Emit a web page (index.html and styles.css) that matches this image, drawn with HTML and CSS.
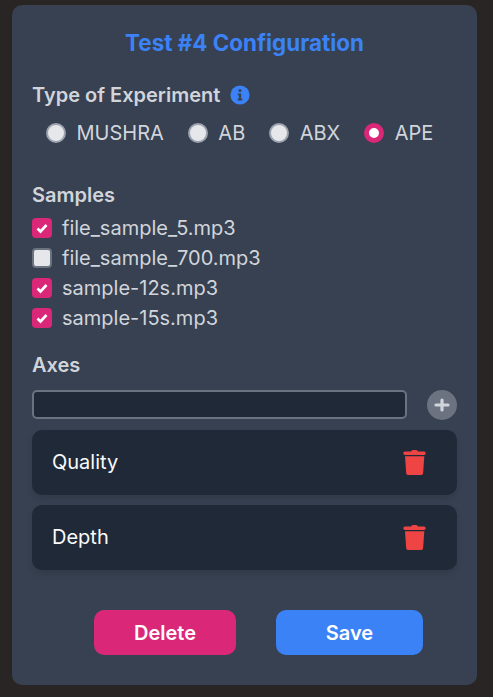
FILE: index.html
```html
<!DOCTYPE html>
<html lang="en">
<head>
  <meta charset="UTF-8">
  <title>Test Configuration</title>
  <link rel="stylesheet" href="styles.css">
</head>
<body>
  <div class="card">
    <h2 class="title">Test #4 Configuration</h2>

    <div class="label-row">
      <span class="label">Type of Experiment</span>
      <svg class="info" viewBox="0 0 20 20"><circle cx="10" cy="10" r="9.6" fill="#3b82f6"/><circle cx="10" cy="5.6" r="1.5" fill="#374151"/><path d="M7.8 8.4h3.4v5.4h1.2v1.8H7.6v-1.8h1.2v-3.6h-1z" fill="#374151"/></svg>
    </div>
    <div class="radios">
      <label class="radio"><input type="radio" name="type"> MUSHRA</label>
      <label class="radio"><input type="radio" name="type"> AB</label>
      <label class="radio"><input type="radio" name="type"> ABX</label>
      <label class="radio"><input type="radio" name="type" checked> APE</label>
    </div>

    <div class="label samples-label">Samples</div>
    <div class="samples">
      <label class="check"><input type="checkbox" checked> file_sample_5.mp3</label>
      <label class="check"><input type="checkbox"> file_sample_700.mp3</label>
      <label class="check"><input type="checkbox" checked> sample-12s.mp3</label>
      <label class="check"><input type="checkbox" checked> sample-15s.mp3</label>
    </div>

    <div class="label axes-label">Axes</div>
    <div class="axis-input">
      <input type="text">
      <button class="add" type="button">
        <svg viewBox="0 0 16 16" width="16" height="16"><path d="M8 3v10M2 8h12" stroke="#d1d5db" stroke-width="3.2" stroke-linecap="round"/></svg>
      </button>
    </div>

    <div class="axis">
      <span>Quality</span>
      <svg class="trash" viewBox="0 0 24 27"><path d="M1.300 4.200q0-1.600 1.600-1.700H9l.8-.9q.4-.6 1-.6h3.400q.6 0 1 .6l.8.9h6q1.700.1 1.700 1.700 0 1.800-1.700 1.800H3q-1.700 0-1.700-1.800z"/><path d="M3 7.200h19.300l-1.200 17.100q-.1 1.700-1.800 1.700H6q-1.700 0-1.800-1.700z"/></svg>
    </div>
    <div class="axis">
      <span>Depth</span>
      <svg class="trash" viewBox="0 0 24 27"><path d="M1.300 4.200q0-1.600 1.600-1.700H9l.8-.9q.4-.6 1-.6h3.400q.6 0 1 .6l.8.9h6q1.700.1 1.700 1.700 0 1.800-1.700 1.800H3q-1.700 0-1.700-1.800z"/><path d="M3 7.200h19.300l-1.200 17.100q-.1 1.700-1.800 1.700H6q-1.700 0-1.800-1.700z"/></svg>
    </div>

    <div class="actions">
      <button class="btn delete" type="button">Delete</button>
      <button class="btn save" type="button">Save</button>
    </div>
  </div>
</body>
</html>
```

FILE: styles.css
```css
* {
  box-sizing: border-box;
}
body {
  margin: 0;
  height: 697px;
  overflow: hidden;
  padding: 5px 16px 12px 12px;
  background: #292524;
  font-family: Inter, sans-serif;
  color: #d1d5db;
}
.card {
  height: 680px;
  padding: 24px 20px;
  background: #374151;
  border-radius: 10px;
}
.title {
  margin: 0;
  text-align: center;
  font-size: 22.4px;
  line-height: 28px;
  font-weight: 700;
  color: #3b82f6;
}
.label {
  font-size: 20px;
  line-height: 24px;
  font-weight: 600;
}
.label-row {
  display: flex;
  align-items: center;
  gap: 10px;
  margin-top: 26px;
}
.info {
  width: 20px;
  height: 20px;
}
.radios {
  display: flex;
  gap: 24px;
  margin-top: 12px;
  padding-left: 14px;
}
.radio, .check {
  display: flex;
  align-items: center;
  gap: 10.5px;
  font-size: 20px;
  line-height: 28px;
}
input[type=radio], input[type=checkbox] {
  appearance: none;
  flex: none;
  width: 20px;
  height: 20px;
  margin: 0;
  background: #e5e7eb;
  border: 2px solid #9ca3af;
}
input[type=radio] {
  border-radius: 50%;
}
input[type=radio]:checked {
  background: #fff;
  border: 5px solid #db2777;
}
input[type=checkbox] {
  border-radius: 4px;
  border-color: #6b7280;
}
input[type=checkbox]:checked {
  border: 0;
  background: #db2777 url("data:image/svg+xml,%3Csvg xmlns='http://www.w3.org/2000/svg' viewBox='0 0 20 20'%3E%3Cpath d='M5.500 10.500l3 3 6-6.500' fill='none' stroke='white' stroke-width='2.600'/%3E%3C/svg%3E");
}
.samples-label {
  margin-top: 36px;
}
.samples {
  margin-top: 6px;
}
.samples .check {
  height: 30px;
  gap: 10px;
}
.axes-label {
  margin-top: 20px;
}
.axis-input {
  display: flex;
  align-items: flex-start;
  gap: 20px;
  margin-top: 13px;
}
.axis-input input {
  flex: 1;
  height: 29px;
  background: #1f2937;
  border: 2px solid #6b7280;
  border-radius: 5px;
}
.add {
  display: flex;
  align-items: center;
  justify-content: center;
  width: 30px;
  height: 30px;
  padding: 0;
  border: 0;
  border-radius: 50%;
  background: #6b7280;
}
.axis {
  display: flex;
  align-items: center;
  justify-content: space-between;
  height: 65px;
  margin-top: 10px;
  padding: 0 31px 0 20px;
  background: #1f2937;
  border-radius: 10px;
  box-shadow: 0 4px 6px rgba(0,0,0,0.1);
  color: #f9fafb;
  font-size: 20px;
}
.axis span {
  margin-bottom: 2px;
}
.trash {
  width: 24px;
  height: 27px;
  fill: #ef4444;
}
.actions {
  display: flex;
  justify-content: center;
  gap: 40px;
  margin-top: 40px;
  padding-left: 28px;
}
.btn {
  height: 45px;
  border: 0;
  border-radius: 10px;
  font-family: inherit;
  font-size: 20px;
  font-weight: 600;
  color: #fff;
}
.delete {
  width: 142px;
  background: #db2777;
}
.save {
  width: 147px;
  background: #3b82f6;
}
```
